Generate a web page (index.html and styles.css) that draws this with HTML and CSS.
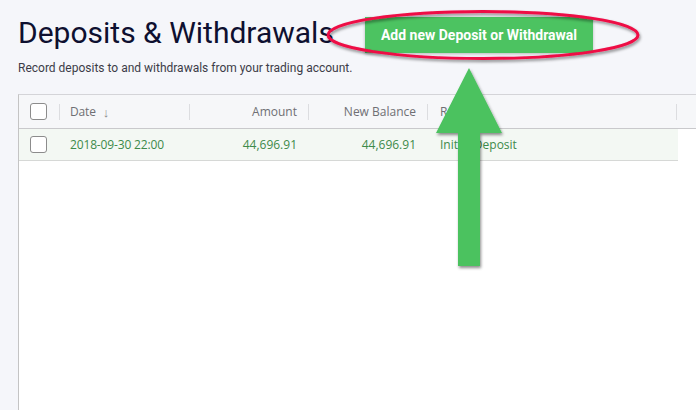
FILE: index.html
```html
<!DOCTYPE html>
<html>
<head>
<meta charset="utf-8">
<link rel="stylesheet" href="styles.css">
</head>
<body>
<div class="page">
  <header class="top">
    <div class="titles">
      <h1 class="title">Deposits &amp; Withdrawals</h1>
      <p class="subtitle">Record deposits to and withdrawals from your trading account.</p>
    </div>
    <button class="add-btn">Add new Deposit or Withdrawal</button>
  </header>
  <section class="grid">
    <div class="row head">
      <div class="cell chk"><span class="box"></span></div>
      <div class="cell date sep">Date <span class="sort">&#8595;</span></div>
      <div class="cell num sep">Amount</div>
      <div class="cell num sep">New Balance</div>
      <div class="cell reason sep">Reason</div>
    </div>
    <div class="row item">
      <div class="cell chk"><span class="box"></span></div>
      <div class="cell date">2018-09-30 22:00</div>
      <div class="cell num">44,696.91</div>
      <div class="cell num">44,696.91</div>
      <div class="cell reason">Initial Deposit</div>
    </div>
  </section>
</div>
<svg class="annot" width="696" height="410" viewBox="0 0 696 410" xmlns="http://www.w3.org/2000/svg">
  <defs>
    <filter id="sh" x="-20%" y="-20%" width="140%" height="140%">
      <feDropShadow dx="1" dy="2" stdDeviation="1.5" flood-color="#000" flood-opacity="0.45"/>
    </filter>
  </defs>
  <ellipse cx="483" cy="35" rx="155" ry="23.5" fill="none" stroke="#ee0a44" stroke-width="3" filter="url(#sh)"/>
  <polygon points="469,68 502,133 480,133 480,266 458,266 458,133 436,133" fill="#4bc25e" filter="url(#sh)"/>
</svg>
</body>
</html>
```
FILE: styles.css
```css
html, body {
  margin: 0;
  padding: 0;
}
body {
  background: #f5f6fa;
  width: 696px;
  height: 410px;
  overflow: hidden;
  position: relative;
  font-family: Roboto, "Liberation Sans", sans-serif;
}
.page {
  display: flex;
  flex-direction: column;
  height: 410px;
}
.top {
  display: flex;
  align-items: flex-start;
  padding: 17px 0 0 18px;
  height: 77px;
  box-sizing: border-box;
}
.titles {
  display: flex;
  flex-direction: column;
  width: 347px;
  flex: none;
}
.title {
  margin: 0;
  font-size: 30px;
  font-weight: 400;
  line-height: 32px;
  color: #0e1030;
  white-space: nowrap;
}
.subtitle {
  margin: 12px 0 0 0;
  font-size: 12px;
  line-height: 14px;
  color: #3c3c48;
  white-space: nowrap;
}
.add-btn {
  margin: 0;
  width: 228px;
  height: 36px;
  border: none;
  background: #4cc361;
  color: #fff;
  font-family: Roboto, "Liberation Sans", sans-serif;
  font-weight: 700;
  font-size: 14px;
  box-shadow: 0 1px 3px rgba(0,0,0,0.25);
  padding: 0;
}
.grid {
  margin-left: 18px;
  margin-top: 17px;
  flex: 1;
  background: #fff;
  border-left: 1px solid #c4c4c4;
  border-top: 1px solid #d4d4d8;
  font-family: "Open Sans", "Noto Sans", sans-serif;
  font-size: 12px;
}
.row {
  display: flex;
  align-items: center;
  box-sizing: border-box;
}
.row.head {
  height: 34px;
  background: #f6f7f9;
  border-bottom: 1px solid #c9c9cc;
  color: #6f6f74;
}
.row.item {
  width: 659px;
  height: 32px;
  background: #f3f8f3;
  border-bottom: 1px solid #d6d8d6;
  color: #3d8a4a;
}
.cell {
  box-sizing: border-box;
  height: 100%;
  display: flex;
  align-items: center;
  position: relative;
  white-space: nowrap;
}
.chk {
  width: 40px;
  padding-left: 11px;
}
.box {
  width: 15px;
  height: 15px;
  border: 1px solid #8c8c8c;
  border-radius: 3px;
  background: #fff;
  display: block;
}
.date {
  width: 130px;
  padding-left: 11px;
  letter-spacing: -0.15px;
}
.num {
  width: 119px;
  justify-content: flex-end;
  padding-right: 11px;
}
.reason {
  width: 250px;
  padding-left: 13px;
}
.head .sep::before {
  content: "";
  position: absolute;
  left: 0;
  top: 9px;
  height: 16px;
  border-left: 1px solid #dcdde0;
}
.head .reason::after {
  content: "";
  position: absolute;
  right: 0;
  top: 9px;
  height: 16px;
  border-left: 1px solid #dcdde0;
}
.sort {
  margin-left: 7px;
  font-size: 13px;
  color: #8a8a8a;
}
.annot {
  position: absolute;
  left: 0;
  top: 0;
  pointer-events: none;
}
```
